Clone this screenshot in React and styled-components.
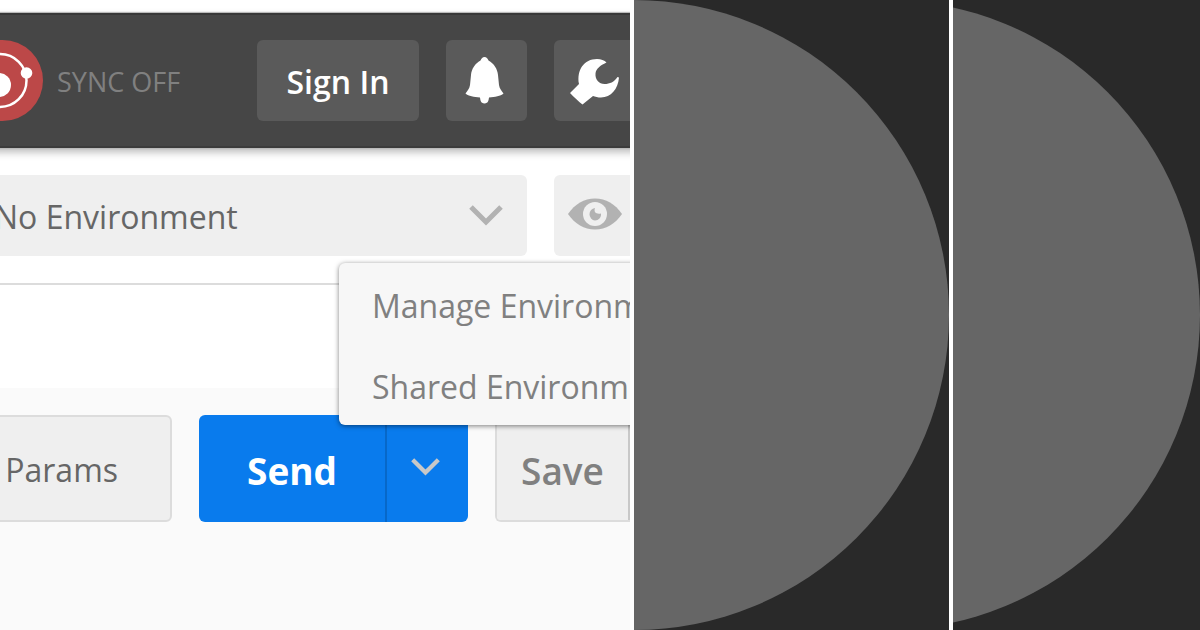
import React from "react";
import styled, { createGlobalStyle } from "styled-components";

const GlobalStyle = createGlobalStyle`
  *, *::before, *::after { box-sizing: border-box; }
  body { margin: 0; background: #fff; font-family: "Open Sans", "Noto Sans", sans-serif; }
  button, select { font: inherit; margin: 0; border: 0; cursor: pointer; }
  svg { display: block; flex: none; }
`;

const Page = styled.div`
  display: grid;
  grid-template-columns: 630fr 315fr 247fr;
  gap: 4px;
  height: 100vh;
  overflow: hidden;
`;

const Panel = styled.section`
  min-width: 0;
  overflow: hidden;
  background: ${(p) => p.$color};
`;

/* The app is wider than its panel, which crops it on both sides. */
const AppFrame = styled.div`
  display: flex;
  flex-direction: column;
  min-height: 100%;
  margin: 0 -32px 0 -40px;
  padding-top: 13px;
`;

const Header = styled.header`
  display: flex;
  align-items: center;
  gap: 27px;
  padding: 25px 27px 25px 3px;
  background: #464646;
  border-top: 2px solid #383838;
  border-bottom: 2px solid #3c3c3c;
  box-shadow: 0 0 1px 1px #bbb, 0 4px 8px rgba(0, 0, 0, 0.28);
`;

const Sync = styled.div`
  display: flex;
  flex: 1;
  align-items: center;
  gap: 14px;
  color: #808080;
  font-size: 27px;
  line-height: 36px;
  white-space: nowrap;

  > span { padding-top: 2px; }
`;

const HeaderButton = styled.button`
  display: flex;
  align-items: center;
  justify-content: center;
  width: ${(p) => (p.$wide ? "162px" : "81px")};
  height: 81px;
  padding: ${(p) => (p.$wide ? "2px 0 0" : "0")};
  border-radius: 6px;
  background: #5a5a5a;
  color: #fff;
  font-size: 32px;
  font-weight: 600;
`;

const EnvironmentBar = styled.div`
  position: relative;
  display: flex;
  gap: 27px;
  padding: 27px 27px 27px 0;
  border-bottom: 2px solid #dcdcdc;
`;

const SelectBox = styled.label`
  display: grid;
  flex: 1;
  align-items: center;
  > * { grid-area: 1 / 1; }
  > svg { justify-self: end; margin: 0 24px 2px 0; pointer-events: none; }
`;

const Select = styled.select`
  appearance: none;
  width: 100%;
  height: 81px;
  padding: 2px 72px 0 34px;
  border-radius: 6px;
  background: #efefef;
  color: #666;
  font-size: 32px;
`;

const PreviewButton = styled.button`
  display: flex;
  align-items: center;
  justify-content: center;
  width: 81px;
  height: 81px;
  padding: 0 0 4px;
  border-radius: 6px;
  background: #efefef;
`;

const Menu = styled.div`
  position: absolute;
  z-index: 1;
  top: 115px;
  right: 0;
  width: 323px;
  border-radius: 6px 0 0 6px;
  background: #f7f7f7;
  box-shadow: 0 1px 5px rgba(0, 0, 0, 0.5);
`;

const MenuItem = styled.button`
  display: block;
  width: 100%;
  padding: 21px 0 16px 33px;
  overflow: hidden;
  background: none;
  color: #808080;
  font-size: 32px;
  line-height: 44px;
  text-align: left;
  white-space: nowrap;
`;

const TabSpace = styled.div`
  height: 103px;
  background: #fff;
`;

const RequestBar = styled.div`
  display: flex;
  flex: 1;
  align-items: flex-start;
  gap: 27px;
  padding-top: 27px;
  background: #fafafa;
`;

const ParamsButton = styled.button`
  flex: 1;
  height: 107px;
  padding: 2px 52px 0 0;
  border: 2px solid #dcdcdc;
  border-radius: 6px;
  background: #efefef;
  color: #666;
  font-size: 32px;
  text-align: right;
`;

const SplitButton = styled.div`
  display: flex;
  height: 107px;
  overflow: hidden;
  border: ${(p) => (p.$primary ? "0" : "2px solid #dcdcdc")};
  border-radius: ${(p) => (p.$primary ? "6px" : "6px 0 0 6px")};
  border-right: 0;
`;

const SplitPart = styled.button`
  display: flex;
  align-items: center;
  justify-content: center;
  width: ${(p) => p.$width}px;
  padding: 4px 0 0;
  background: ${(p) => (p.$primary ? "#097bed" : "#efefef")};
  color: ${(p) => (p.$primary ? "#fff" : "#808080")};
  font-size: 37px;
  font-weight: ${(p) => (p.$primary ? 700 : 600)};
  border-left: ${(p) => (p.$divider ? `2px solid ${p.$divider}` : "0")};

  > svg { margin: 0 4px 8px 0; }
`;

const Disc = styled.svg`
  width: 100%;
  height: 100%;
`;

function SyncIcon() {
  return (
    <svg width="80" height="81" viewBox="0 0 80 81" aria-hidden="true">
      <circle cx="39.5" cy="40.5" r="40.5" fill="#bc4848" />
      <circle cx="37" cy="40.500" r="26.5" fill="none" stroke="#fff" strokeWidth="2.5" />
      <circle cx="36" cy="45" r="12" fill="#fff" />
      <circle cx="63.5" cy="33" r="5.8" fill="#fff" />
    </svg>
  );
}

function BellIcon() {
  return (
    <svg width="44" height="48" viewBox="0 0 44 48" aria-hidden="true">
      <path fill="#fff" d="M19.500 0c2 0 3 1.500 4 3.500 5.500 3 9 8.500 9.500 14.500l1 10c.5 3.500 2.500 5.500 4.500 8.500-3 2.500-8.500 3.700-14.500 4-.3 2-.5 6-4.500 6s-4.200-4-4.500-6c-6-.3-11.500-1.500-14.500-4C2.500 33.500 4.500 31.500 5 28l1-10c.5-6 4-11.500 9.500-14.500 1-2 2-3.500 4-3.500z" />
    </svg>
  );
}

function WrenchIcon() {
  return (
    <svg width="50" height="48" viewBox="0 0 50 48" aria-hidden="true">
      <path fill="#fff" d="M0 36l9-9C6.500 13 14 2 27 2c4 0 7.500 1.300 9.500 3.500C30 8.500 26 12 25.500 16.500 25 22.500 29 27 34.500 27c5.500 0 9.500-2 13-7l1.500.5C48 32 41 40.500 31 40.500c-3 0-6-.6-8-1.500L12.500 47.500C9 45 4 40 0 36z" />
    </svg>
  );
}

function Chevron({ width, height, color }) {
  return (
    <svg width={width} height={height} viewBox="0 0 34 22" aria-hidden="true">
      <path d="M2 3l15 15L32 3" fill="none" stroke={color} strokeWidth="5" />
    </svg>
  );
}

function EyeIcon() {
  return (
    <svg width="54" height="32" viewBox="0 0 54 32" aria-hidden="true">
      <path fill="#b2b2b2" d="M0 16C7 6 16 .5 27 .5S47 6 54 16c-7 10-16 15.500-27 15.500S7 26 0 16z" />
      <circle cx="27" cy="16" r="12" fill="#efefef" />
      <path fill="#b2b2b2" d="M27 10c-1.500 4 1 6.500 6 5.500.5 4-2.500 7-6 7a6.300 6.300 0 0 1 0-12.500z" />
    </svg>
  );
}

export default function App() {
  return (
    <Page>
      <GlobalStyle />
      <Panel $color="#fff">
        <AppFrame>
          <Header>
            <Sync>
              <SyncIcon />
              <span>SYNC OFF</span>
            </Sync>
            <HeaderButton $wide>Sign In</HeaderButton>
            <HeaderButton aria-label="Notifications"><BellIcon /></HeaderButton>
            <HeaderButton aria-label="Settings"><WrenchIcon /></HeaderButton>
          </Header>

          <EnvironmentBar>
            <SelectBox>
              <Select aria-label="Environment">
                <option>No Environment</option>
              </Select>
              <Chevron width={34} height={22} color="#b2b2b2" />
            </SelectBox>
            <PreviewButton aria-label="Environment quick look"><EyeIcon /></PreviewButton>
            <Menu>
              <MenuItem>Manage Environments</MenuItem>
              <MenuItem>Shared Environments</MenuItem>
            </Menu>
          </EnvironmentBar>

          <TabSpace />

          <RequestBar>
            <ParamsButton>Params</ParamsButton>
            <SplitButton $primary>
              <SplitPart $primary $width={186}>Send</SplitPart>
              <SplitPart $primary $width={83} $divider="#0768c9" aria-label="Send options">
                <Chevron width={29} height={19} color="#c8c8c8" />
              </SplitPart>
            </SplitButton>
            <SplitButton>
              <SplitPart $width={131}>Save</SplitPart>
              <SplitPart $width={34} $divider="#c8c8c8" aria-label="Save options" />
            </SplitButton>
          </RequestBar>
        </AppFrame>
      </Panel>

      <Panel $color="#292929">
        <Disc viewBox="0 0 315 630" preserveAspectRatio="xMinYMid slice" aria-hidden="true">
          <circle cx="0" cy="315" r="315" fill="#666" />
        </Disc>
      </Panel>
      <Panel $color="#292929">
        <Disc viewBox="68 0 247 630" preserveAspectRatio="xMaxYMid slice" aria-hidden="true">
          <circle cx="0" cy="315" r="315" fill="#666" />
        </Disc>
      </Panel>
    </Page>
  );
}
